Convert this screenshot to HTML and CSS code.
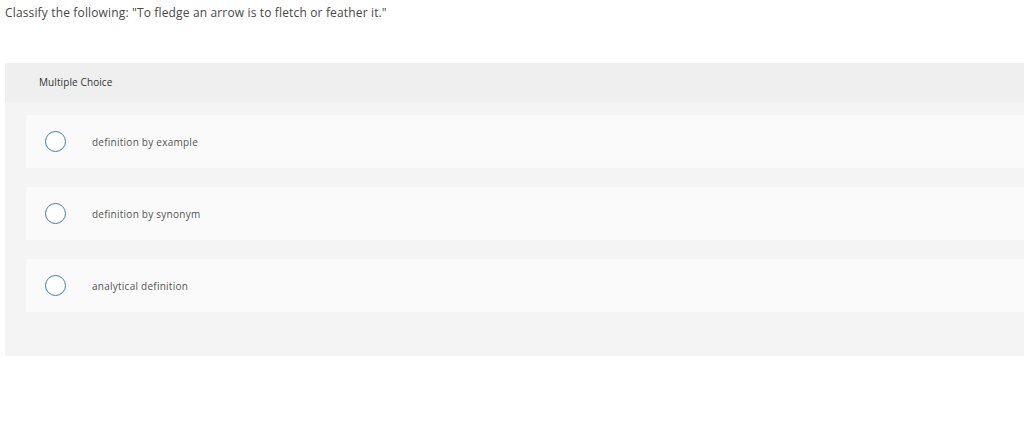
FILE: index.html
```html
<!DOCTYPE html>
<html lang="en">
<head>
  <meta charset="UTF-8">
  <title>Multiple Choice</title>
  <link rel="stylesheet" href="styles.css">
</head>
<body>
  <p class="prompt">Classify the following: "To fledge an arrow is to fletch or feather it."</p>

  <div class="question">
    <div class="question-header">Multiple Choice</div>
    <div class="choices">
      <label class="choice">
        <span class="radio"></span>
        <span class="choice-text">definition by example</span>
      </label>
      <label class="choice">
        <span class="radio"></span>
        <span class="choice-text">definition by synonym</span>
      </label>
      <label class="choice">
        <span class="radio"></span>
        <span class="choice-text">analytical definition</span>
      </label>
    </div>
  </div>
</body>
</html>
```

FILE: styles.css
```css
body {
  margin: 0;
  padding: 0 0 0 5px;
  font-family: "Open Sans", "Liberation Sans", sans-serif;
  color: #444;
  background: #fff;
  overflow: hidden;
}
.prompt {
  margin: 0;
  padding-top: 5px;
  height: 58px;
  font-size: 12px;
  letter-spacing: 0.15px;
  line-height: 16px;
  color: #484848;
}
.question {
  width: 1040px;
  background-color: #f4f4f4;
  border-radius: 2px;
  padding-bottom: 44px;
}
.question-header {
  height: 39px;
  line-height: 39px;
  padding-left: 34px;
  background-color: #efefef;
  font-size: 10px;
  letter-spacing: 0.1px;
  color: #333;
}
.choices {
  display: flex;
  flex-direction: column;
  gap: 19px;
  padding: 13px 0 0 21px;
}
.choice {
  display: flex;
  align-items: center;
  height: 53px;
  background-color: #fafafa;
  border-radius: 2px;
  cursor: pointer;
}
.radio {
  width: 19px;
  height: 19px;
  margin-left: 19px;
  margin-right: 26px;
  border: 1.5px solid #4a7bb0;
  border-radius: 50%;
  background: #fff;
}
.choice-text {
  font-size: 10px;
  letter-spacing: 0.25px;
  color: #555;
}
```
